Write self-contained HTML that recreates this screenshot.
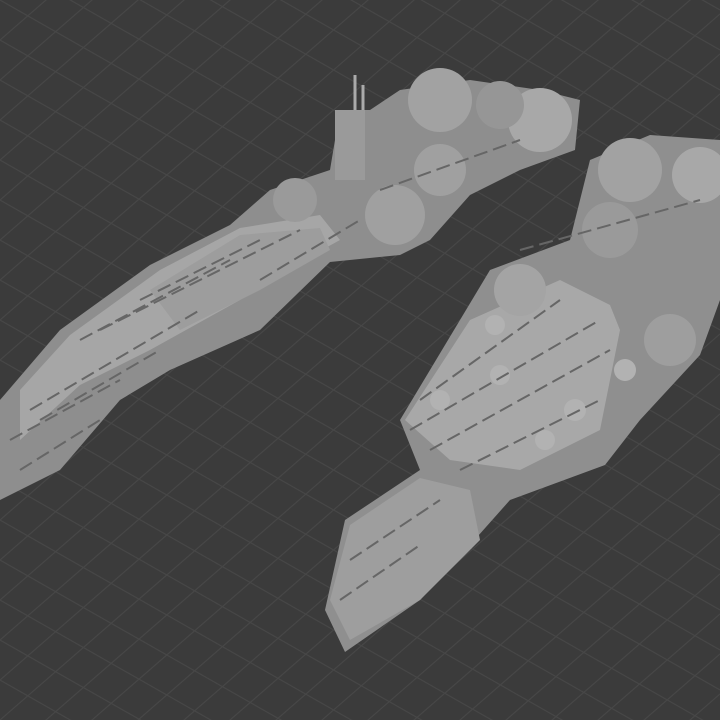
<!DOCTYPE html>
<html><head><style>html,body{margin:0;padding:0;background:#3b3b3b;overflow:hidden;width:720px;height:720px}svg{display:block}</style></head>
<body>
<svg width="720" height="720" viewBox="0 0 720 720" xmlns="http://www.w3.org/2000/svg">
<rect width="720" height="720" fill="#3b3b3b"/>
<g stroke="#474747" stroke-width="1.2">
<line x1="0" y1="-400" x2="720" y2="10"/><line x1="0" y1="-360" x2="720" y2="50"/><line x1="0" y1="-320" x2="720" y2="90"/><line x1="0" y1="-280" x2="720" y2="130"/><line x1="0" y1="-240" x2="720" y2="170"/><line x1="0" y1="-200" x2="720" y2="210"/><line x1="0" y1="-160" x2="720" y2="250"/><line x1="0" y1="-120" x2="720" y2="290"/><line x1="0" y1="-80" x2="720" y2="330"/><line x1="0" y1="-40" x2="720" y2="370"/><line x1="0" y1="0" x2="720" y2="410"/><line x1="0" y1="40" x2="720" y2="450"/><line x1="0" y1="80" x2="720" y2="490"/><line x1="0" y1="120" x2="720" y2="530"/><line x1="0" y1="160" x2="720" y2="570"/><line x1="0" y1="200" x2="720" y2="610"/><line x1="0" y1="240" x2="720" y2="650"/><line x1="0" y1="280" x2="720" y2="690"/><line x1="0" y1="320" x2="720" y2="730"/><line x1="0" y1="360" x2="720" y2="770"/><line x1="0" y1="400" x2="720" y2="810"/><line x1="0" y1="440" x2="720" y2="850"/><line x1="0" y1="480" x2="720" y2="890"/><line x1="0" y1="520" x2="720" y2="930"/><line x1="0" y1="560" x2="720" y2="970"/><line x1="0" y1="600" x2="720" y2="1010"/><line x1="0" y1="640" x2="720" y2="1050"/><line x1="0" y1="680" x2="720" y2="1090"/>
<line x1="0" y1="40" x2="720" y2="-586"/><line x1="0" y1="80" x2="720" y2="-546"/><line x1="0" y1="120" x2="720" y2="-506"/><line x1="0" y1="160" x2="720" y2="-466"/><line x1="0" y1="200" x2="720" y2="-426"/><line x1="0" y1="240" x2="720" y2="-386"/><line x1="0" y1="280" x2="720" y2="-346"/><line x1="0" y1="320" x2="720" y2="-306"/><line x1="0" y1="360" x2="720" y2="-266"/><line x1="0" y1="400" x2="720" y2="-226"/><line x1="0" y1="440" x2="720" y2="-186"/><line x1="0" y1="480" x2="720" y2="-146"/><line x1="0" y1="520" x2="720" y2="-106"/><line x1="0" y1="560" x2="720" y2="-66"/><line x1="0" y1="600" x2="720" y2="-26"/><line x1="0" y1="640" x2="720" y2="14"/><line x1="0" y1="680" x2="720" y2="54"/><line x1="0" y1="720" x2="720" y2="94"/><line x1="0" y1="760" x2="720" y2="134"/><line x1="0" y1="800" x2="720" y2="174"/><line x1="0" y1="840" x2="720" y2="214"/><line x1="0" y1="880" x2="720" y2="254"/><line x1="0" y1="920" x2="720" y2="294"/><line x1="0" y1="960" x2="720" y2="334"/><line x1="0" y1="1000" x2="720" y2="374"/><line x1="0" y1="1040" x2="720" y2="414"/><line x1="0" y1="1080" x2="720" y2="454"/><line x1="0" y1="1120" x2="720" y2="494"/><line x1="0" y1="1160" x2="720" y2="534"/><line x1="0" y1="1200" x2="720" y2="574"/><line x1="0" y1="1240" x2="720" y2="614"/><line x1="0" y1="1280" x2="720" y2="654"/><line x1="0" y1="1320" x2="720" y2="694"/><line x1="0" y1="1360" x2="720" y2="734"/>
</g>
<!-- ship 1 -->
<g>
<polygon fill="#8e8e8e" points="0,400 60,330 150,265 230,225 270,190 330,170 340,110 370,110 400,90 470,80 540,90 580,100 575,150 520,170 470,195 430,240 400,255 330,262 260,330 170,370 120,400 60,470 0,500"/>
<polygon fill="#a6a6a6" points="20,390 70,335 160,270 240,228 320,215 340,240 300,262 240,300 150,350 80,385 20,440"/>
<polygon fill="#9d9d9d" points="150,290 240,235 320,228 330,250 260,290 180,330"/>
<circle cx="440" cy="100" r="32" fill="#a2a2a2"/><circle cx="540" cy="120" r="32" fill="#a8a8a8"/>
<circle cx="500" cy="105" r="24" fill="#969696"/><circle cx="395" cy="215" r="30" fill="#a0a0a0"/>
<circle cx="295" cy="200" r="22" fill="#9a9a9a"/><circle cx="440" cy="170" r="26" fill="#a0a0a0"/>
<rect x="335" y="110" width="30" height="70" fill="#9a9a9a"/>
<line x1="355" y1="75" x2="355" y2="110" stroke="#aaa" stroke-width="3"/>
<line x1="363" y1="85" x2="363" y2="110" stroke="#aaa" stroke-width="3"/>
<g stroke="#666" stroke-width="2" fill="none" stroke-dasharray="14 6">
<path d="M10 440 L120 380 M40 420 L160 350 M80 340 L230 260 M140 300 L260 240 M260 280 L360 220 M380 190 L520 140 M20 470 L100 420 M30 410 L200 310 M100 330 L300 230"/>
</g>
</g>
<!-- ship 2 -->
<g>
<polygon fill="#8f8f8f" points="325,610 345,520 420,470 400,420 460,320 490,270 570,240 590,160 650,135 720,140 720,300 700,355 640,420 605,465 510,500 470,545 420,600 345,652"/>
<polygon fill="#a8a8a8" points="405,420 470,320 560,280 610,305 620,330 600,430 520,470 450,460"/>
<polygon fill="#9e9e9e" points="330,600 350,525 420,478 470,490 480,540 420,600 350,640"/>
<circle cx="630" cy="170" r="32" fill="#a2a2a2"/><circle cx="700" cy="175" r="28" fill="#a8a8a8"/>
<circle cx="520" cy="290" r="26" fill="#a4a4a4"/><circle cx="670" cy="340" r="26" fill="#9e9e9e"/>
<circle cx="610" cy="230" r="28" fill="#9a9a9a"/>
<g fill="#b2b2b2"><circle cx="495" cy="325" r="10"/><circle cx="440" cy="400" r="10"/><circle cx="500" cy="375" r="10"/><circle cx="575" cy="410" r="11"/><circle cx="545" cy="440" r="10"/><circle cx="625" cy="370" r="11"/></g>
<g stroke="#666" stroke-width="2" fill="none" stroke-dasharray="14 6">
<path d="M410 430 L600 320 M430 450 L610 350 M460 470 L600 400 M350 560 L440 500 M340 600 L420 545 M520 250 L700 200 M420 400 L560 300"/>
</g>
</g>
</svg>
</body></html>
